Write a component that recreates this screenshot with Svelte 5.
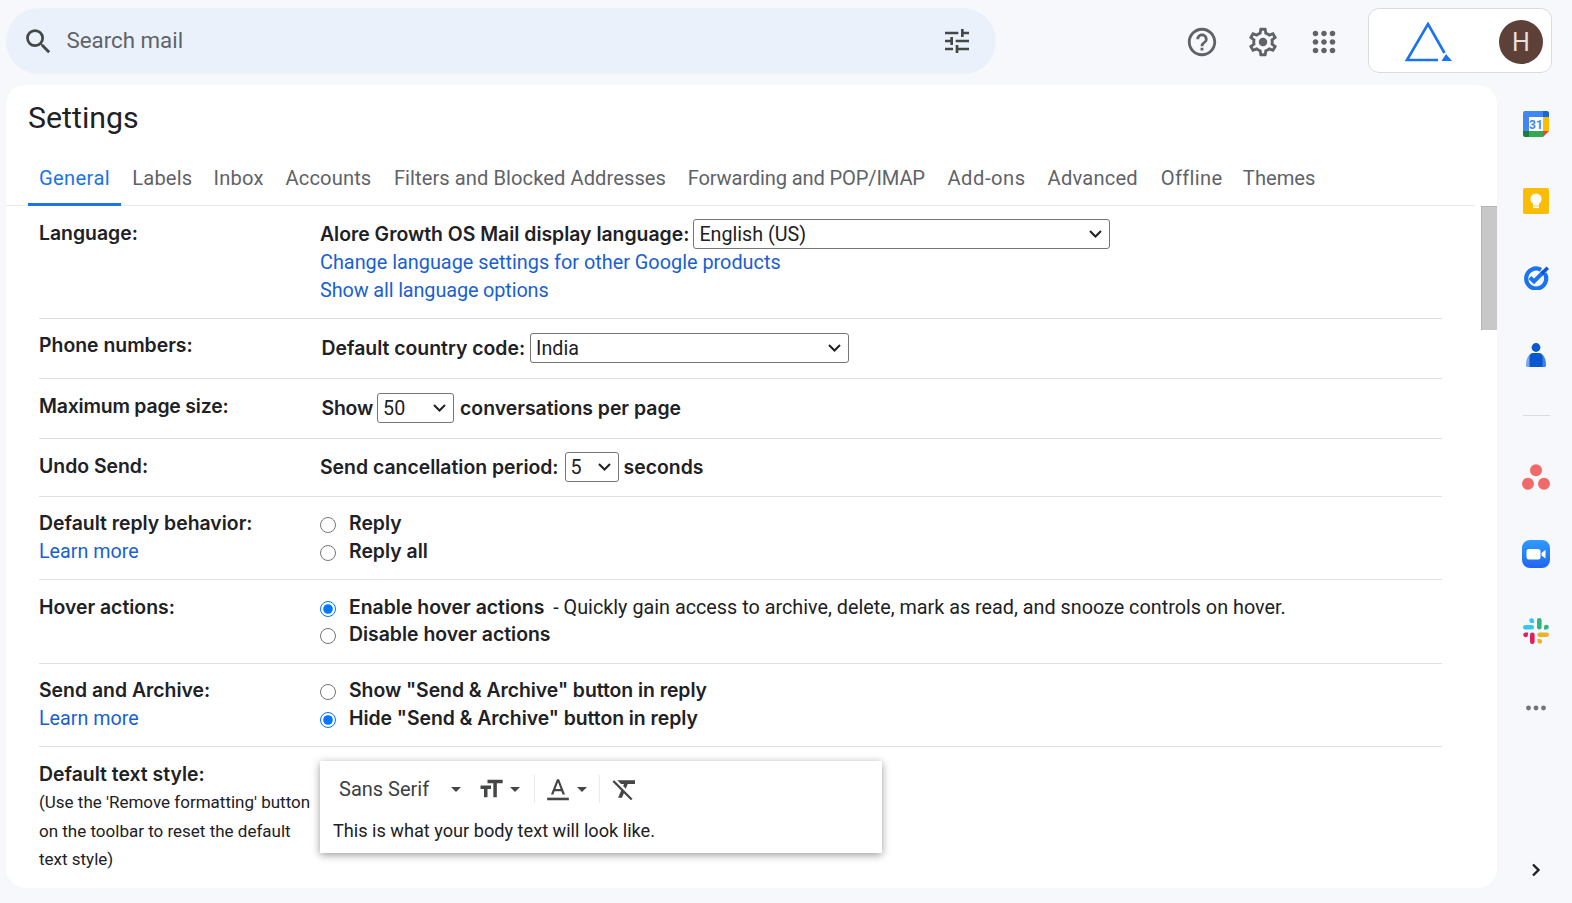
<script>
  const tabs = [
    { name: 'General', w: 93.3, sp: 0.35 },
    { name: 'Labels', w: 81.3, sp: 0.15 },
    { name: 'Inbox', w: 72, sp: 0.2 },
    { name: 'Accounts', w: 108.3, sp: 0.1 },
    { name: 'Filters and Blocked Addresses', w: 293.8, sp: 0.06 },
    { name: 'Forwarding and POP/IMAP', w: 259.7, sp: -0.16 },
    { name: 'Add-ons', w: 100.2, sp: 0.55 },
    { name: 'Advanced', w: 113.3, sp: 0.2 },
    { name: 'Offline', w: 82, sp: 0.3 },
    { name: 'Themes', w: 94.4, sp: 0 }
  ];
</script>

<div class="page">
  <header class="top">
    <div class="search">
      <svg class="ic-search" viewBox="0 0 24 24" width="33" height="33"><path fill="#444746" d="M15.5 14h-.79l-.28-.27A6.47 6.47 0 0 0 16 9.5 6.5 6.5 0 1 0 9.5 16c1.61 0 3.09-.59 4.23-1.57l.27.28v.79l5 4.99L20.49 19l-4.99-5zm-6 0C7.01 14 5 11.99 5 9.5S7.01 5 9.5 5 14 7.01 14 9.5 11.99 14 9.5 14z"/></svg>
      <span class="search-text">Search mail</span>
      <svg class="ic-filter" viewBox="0 0 24 24" width="32" height="32"><path fill="#444746" d="M3 17v2h6v-2H3zM3 5v2h10V5H3zm10 16v-2h8v-2h-8v-2h-2v6h2zM7 9v2H3v2h4v2h2V9H7zm14 4v-2H11v2h10zm-6-4h2V7h4V5h-4V3h-2v6z"/></svg>
    </div>
    <div class="actions">
      <svg viewBox="0 0 24 24" width="34" height="34"><path fill="#5f6368" d="M11 18h2v-2h-2v2zm1-16C6.48 2 2 6.48 2 12s4.48 10 10 10 10-4.48 10-10S17.52 2 12 2zm0 18c-4.41 0-8-3.59-8-8s3.59-8 8-8 8 3.59 8 8-3.59 8-8 8zm0-14c-2.21 0-4 1.79-4 4h2c0-1.1.9-2 2-2s2 .9 2 2c0 2-3 1.75-3 5h2c0-2.25 3-2.5 3-5 0-2.21-1.79-4-4-4z"/></svg>
      <svg viewBox="0 0 24 24" width="34" height="34"><path fill="#5f6368" d="M19.43 12.98c.04-.32.07-.64.07-.98 0-.34-.03-.66-.07-.98l2.11-1.65c.19-.15.24-.42.12-.64l-2-3.46c-.09-.16-.26-.25-.44-.25-.06 0-.12.01-.17.03l-2.49 1c-.52-.4-1.08-.73-1.69-.98l-.38-2.65A.488.488 0 0 0 14 2h-4c-.25 0-.46.18-.49.42l-.38 2.65c-.61.25-1.17.59-1.69.98l-2.49-1a.566.566 0 0 0-.18-.03c-.17 0-.34.09-.43.25l-2 3.46c-.13.22-.07.49.12.64l2.11 1.65c-.04.32-.07.65-.07.98 0 .33.03.66.07.98l-2.11 1.65c-.19.15-.24.42-.12.64l2 3.46c.09.16.26.25.44.25.06 0 .12-.01.17-.03l2.49-1c.52.4 1.08.73 1.69.98l.38 2.65c.03.24.24.42.49.42h4c.25 0 .46-.18.49-.42l.38-2.65c.61-.25 1.17-.59 1.69-.98l2.49 1c.06.02.12.03.18.03.17 0 .34-.09.43-.25l2-3.46c.12-.22.07-.49-.12-.64l-2.11-1.65zm-1.98-1.71c.04.31.05.52.05.73 0 .21-.02.43-.05.73l-.14 1.13.89.7 1.08.84-.7 1.21-1.27-.51-1.04-.42-.9.68c-.43.32-.84.56-1.25.73l-1.06.43-.16 1.13-.2 1.35h-1.4l-.19-1.35-.16-1.13-1.06-.43c-.43-.18-.83-.41-1.23-.71l-.91-.7-1.06.43-1.27.51-.7-1.21 1.08-.84.89-.7-.14-1.13c-.03-.31-.05-.54-.05-.74s.02-.43.05-.73l.14-1.13-.89-.7-1.08-.84.7-1.21 1.27.51 1.04.42.9-.68c.43-.32.84-.56 1.25-.73l1.06-.43.16-1.13.2-1.35h1.39l.19 1.35.16 1.13 1.06.43c.43.18.83.41 1.23.71l.91.7 1.06-.43 1.27-.51.7 1.21-1.07.85-.89.7.14 1.13z"/><circle cx="12" cy="12" r="3" fill="#5f6368"/></svg>
      <svg viewBox="0 0 24 24" width="34" height="34"><path fill="#5f6368" d="M6 8c1.1 0 2-.9 2-2s-.9-2-2-2-2 .9-2 2 .9 2 2 2zm6 12c1.1 0 2-.9 2-2s-.9-2-2-2-2 .9-2 2 .9 2 2 2zm-6 0c1.1 0 2-.9 2-2s-.9-2-2-2-2 .9-2 2 .9 2 2 2zm0-6c1.1 0 2-.9 2-2s-.9-2-2-2-2 .9-2 2 .9 2 2 2zm6 0c1.1 0 2-.9 2-2s-.9-2-2-2-2 .9-2 2 .9 2 2 2zm4-8c0 1.1.9 2 2 2s2-.9 2-2-.9-2-2-2-2 .9-2 2zm-4 2c1.1 0 2-.9 2-2s-.9-2-2-2-2 .9-2 2 .9 2 2 2zm6 6c1.1 0 2-.9 2-2s-.9-2-2-2-2 .9-2 2 .9 2 2 2zm0 6c1.1 0 2-.9 2-2s-.9-2-2-2-2 .9-2 2 .9 2 2 2z"/></svg>
    </div>
    <div class="account">
      <svg class="logo" viewBox="0 0 48 40" width="48" height="40">
        <path d="M39.500 31 L23 2 L2 38 H33" fill="none" stroke="#1a73f0" stroke-width="2.6"/>
        <path d="M41 32 L47 39 H36.500 Z" fill="#1a73f0"/>
      </svg>
      <div class="avatar">H</div>
    </div>
  </header>

  <div class="body">
    <section class="card">
      <h1>Settings</h1>
      <nav class="tabs">
        {#each tabs as t, i}
          <span class="tab" class:active={i === 0} style="width:{t.w}px;letter-spacing:{t.sp}px">{t.name}</span>
        {/each}
      </nav>
      <div class="scrollwrap">
        <div class="content">
          <div class="row r1">
            <div class="label">Language:</div>
            <div class="val">
              <div class="line strong"><span>Alore Growth OS Mail display language:</span>
                <select class="s-lang"><option>English (US)</option></select>
              </div>
              <div class="line"><span class="link">Change language settings for other Google products</span></div>
              <div class="line"><span class="link tight">Show all language options</span></div>
            </div>
          </div>
          <div class="row r2">
            <div class="label">Phone numbers:</div>
            <div class="val shifted">
              <div class="line strong"><span>Default country code:</span>
                <select class="s-country"><option>India</option></select>
              </div>
            </div>
          </div>
          <div class="row r3">
            <div class="label narrow">Maximum page size:</div>
            <div class="val shifted">
              <div class="line strong"><span class="narrow">Show</span>
                <select class="s-page"><option>50</option></select>
                <span>conversations per page</span>
              </div>
            </div>
          </div>
          <div class="row r4">
            <div class="label">Undo Send:</div>
            <div class="val">
              <div class="line strong"><span>Send cancellation period:</span>
                <select class="s-undo"><option>5</option></select>
                <span>seconds</span>
              </div>
            </div>
          </div>
          <div class="row r5">
            <div class="label">Default reply behavior:<div class="link lm">Learn more</div></div>
            <div class="val">
              <label class="radio"><input type="radio" name="reply" /><b>Reply</b></label>
              <label class="radio"><input type="radio" name="reply" /><b>Reply all</b></label>
            </div>
          </div>
          <div class="row r6">
            <div class="label">Hover actions:</div>
            <div class="val">
              <label class="radio"><input type="radio" name="hover" checked /><b>Enable hover actions</b><span class="desc">&nbsp;- Quickly gain access to archive, delete, mark as read, and snooze controls on hover.</span></label>
              <label class="radio"><input type="radio" name="hover" /><b>Disable hover actions</b></label>
            </div>
          </div>
          <div class="row r7">
            <div class="label">Send and Archive:<div class="link lm">Learn more</div></div>
            <div class="val">
              <label class="radio"><input type="radio" name="sa" /><b class="snug">Show "Send &amp; Archive" button in reply</b></label>
              <label class="radio"><input type="radio" name="sa" checked /><b class="snug">Hide "Send &amp; Archive" button in reply</b></label>
            </div>
          </div>
          <div class="row r8">
            <div class="label">Default text style:
              <div class="note">(Use the 'Remove formatting' button on the toolbar to reset the default text style)</div>
            </div>
            <div class="val">
              <div class="editor">
                <div class="toolbar">
                  <span class="font">Sans Serif</span>
                  <i class="arrow a1"></i>
                  <svg class="tsize" viewBox="0 0 24 24" width="24" height="24"><path fill="#444746" d="M9 4v3h5v12h3V7h5V4H9zm-6 8h3v7h3v-7h3V9H3v3z"/></svg>
                  <i class="arrow a2"></i>
                  <span class="sep"></span>
                  <svg class="tcolor" viewBox="0 0 24 24" width="24" height="24"><path fill="#444746" d="M11 3 5.500 17h2.250l1.120-3h6.250l1.120 3h2.250L13 3h-2zm-1.380 9L12 5.670 14.380 12H9.620z"/><rect x="2" y="20" width="20" height="2.400" fill="#444746"/></svg>
                  <i class="arrow a3"></i>
                  <span class="sep s2"></span>
                  <svg class="tclear" viewBox="0 0 24 24" width="26" height="26"><path fill="#444746" d="M3.270 5 2 6.270l6.970 6.970L6.500 19h3l1.570-3.660L16.730 21 18 19.730 3.550 5.270 3.270 5zM6 5v.180L8.820 8h2.400l-.720 1.680 2.100 2.100L14.210 8H20V5H6z"/></svg>
                </div>
                <div class="sample">This is what your body text will look like.</div>
              </div>
            </div>
          </div>
        </div>
        <div class="track"><div class="thumb"></div></div>
      </div>
    </section>

    <aside class="side">
      <div class="item">
        <svg viewBox="0 0 26 26" width="26" height="26">
          <path d="M6 0h14v6H6z" fill="#4285f4"/><path d="M2 0h4v6H0V2a2 2 0 0 1 2-2z" fill="#4285f4"/><path d="M0 6h6v14H0z" fill="#4285f4"/>
          <path d="M20 0h4a2 2 0 0 1 2 2v4h-6z" fill="#1967d2"/><path d="M20 6h6v14h-6z" fill="#fbbc04"/>
          <path d="M6 20h14v6H6z" fill="#34a853"/><path d="M0 20h6v6H2a2 2 0 0 1-2-2z" fill="#188038"/><path d="M20 20h6l-6 6z" fill="#ea4335"/>
          <rect x="6" y="6" width="14" height="14" fill="#fff"/>
          <text x="13" y="17.500" text-anchor="middle" class="cal">31</text>
        </svg>
      </div>
      <div class="item">
        <svg viewBox="0 0 26 26" width="26" height="26">
          <rect width="26" height="26" rx="2" fill="#fbbc04"/>
          <circle cx="13" cy="11" r="5.600" fill="#fff"/><rect x="10" y="15" width="6" height="2.500" fill="#fff"/><rect x="10" y="18.300" width="6" height="1.800" fill="#fff"/>
        </svg>
      </div>
      <div class="item">
        <svg viewBox="0 0 26 24" width="26" height="24">
          <path d="M21.800 7.500A10 10 0 1 1 18 3.800" fill="none" stroke="#1a73f0" stroke-width="4.200"/>
          <path d="M7 11.500l4 4 10-10" fill="none" stroke="#1a73f0" stroke-width="4"/>
          <path d="M17.500 6.500l6-6 2.500 2.500-6 6z" fill="#0b57d0"/>
        </svg>
      </div>
      <div class="item">
        <svg viewBox="0 0 20 24" width="20" height="24">
          <circle cx="10" cy="4.500" r="4.400" fill="#0b57d0"/>
          <path d="M4 24H1.500A1.500 1.500 0 0 1 0 22.500C0 15 3 11 6 10.600V24z" fill="#7aa7f0"/>
          <path d="M16 24h2.500a1.500 1.500 0 0 0 1.500-1.500C20 15 17 11 14 10.600V24z" fill="#3d7ff0"/>
          <path d="M3.500 24V14a4 4 0 0 1 4-4h5a4 4 0 0 1 4 4v10z" fill="#0b57d0"/>
        </svg>
      </div>
      <div class="divider"><span></span></div>
      <div class="item">
        <svg viewBox="0 0 28 26" width="28" height="26"><circle cx="14" cy="6.200" r="6" fill="#f06a6a"/><circle cx="6" cy="19.800" r="6" fill="#f06a6a"/><circle cx="22" cy="19.800" r="6" fill="#f06a6a"/></svg>
      </div>
      <div class="item">
        <svg viewBox="0 0 28 28" width="28" height="28">
          <defs><linearGradient id="z" x1="0" y1="0" x2="0" y2="1"><stop offset="0" stop-color="#2d9bff"/><stop offset="1" stop-color="#2464f0"/></linearGradient></defs>
          <rect width="28" height="28" rx="8" fill="url(#z)"/>
          <rect x="4.500" y="9" width="14" height="10.500" rx="2.500" fill="#fff"/>
          <path d="M19.500 13l4-3.200v8.800l-4-3.200z" fill="#fff"/>
        </svg>
      </div>
      <div class="item">
        <svg viewBox="0 0 26 26" width="26" height="26">
          <g fill="#36c5f0"><rect x="0" y="7" width="11" height="4.600" rx="2.300"/><path d="M11 5V2.600A2.400 2.400 0 1 0 8.600 5z"/></g>
          <g fill="#2eb67d"><rect x="14" y="0" width="4.600" height="11.600" rx="2.300"/><path d="M21 11.500h2.600A2.400 2.400 0 1 0 21 9z"/></g>
          <g fill="#ecb22e"><rect x="14.400" y="14.400" width="11.600" height="4.600" rx="2.300"/><path d="M14.400 21v2.600A2.400 2.400 0 1 0 17 21z"/></g>
          <g fill="#e01e5a"><rect x="7" y="14.400" width="4.600" height="11.600" rx="2.300"/><path d="M5 14.400H2.400A2.400 2.400 0 1 0 5 17z"/></g>
        </svg>
      </div>
      <div class="item">
        <svg viewBox="0 0 20 6" width="20" height="6"><g fill="#70757a"><circle cx="2.500" cy="3" r="2.400"/><circle cx="10" cy="3" r="2.400"/><circle cx="17.500" cy="3" r="2.400"/></g></svg>
      </div>
      <div class="chev">
        <svg viewBox="0 0 10 14" width="10" height="14"><path d="M2 1.500 7.500 7 2 12.500" fill="none" stroke="#1f1f1f" stroke-width="2.400"/></svg>
      </div>
    </aside>
  </div>
</div>

<style>
  :global(body) { margin: 0; background: #f6f8fc; }
  .page { width: 1572px; height: 903px; display: flex; flex-direction: column; overflow: hidden; background: #f6f8fc; font-family: Inter, "Liberation Sans", sans-serif; color: #202124; }
  .top { height: 85px; flex: none; display: flex; align-items: flex-start; padding-left: 6px; }
  .search { width: 990px; height: 66px; flex: none; margin-top: 8px; background: #eaf1fb; border-radius: 33px; display: flex; align-items: center; padding: 0 23px 0 16px; box-sizing: border-box; }
  .search-text { font: 400 22.3px/28px Roboto, sans-serif; color: #5f6368; margin: -2px 0 0 11.5px; flex: 1; }
  .actions { display: flex; gap: 27px; margin: 25px 0 0 189px; flex: none; }
  .account { width: 184px; height: 65px; margin: 8px 0 0 27px; flex: none; box-sizing: border-box; background: #fff; border: 1px solid #dadce0; border-radius: 11px; display: flex; align-items: center; padding: 0 8px 0 36px; justify-content: space-between; }
  .logo { margin-top: 3px; }
  .avatar { width: 44px; height: 44px; border-radius: 50%; background: #5d4037; color: #e9dfdb; font: 400 25px/46px Roboto, sans-serif; text-align: center; margin-top: 2px; }

  .body { flex: 1; min-height: 0; display: flex; padding: 0 0 15px 6px; }
  .card { width: 1491px; flex: none; background: #fff; border-radius: 20px; display: flex; flex-direction: column; overflow: hidden; }
  h1 { margin: 0; font: 400 30.3px/36px Roboto, sans-serif; color: #202124; padding: 15px 0 0 22px; height: 51px; flex: none; box-sizing: content-box; }
  .tabs { height: 55px; flex: none; box-sizing: border-box; display: flex; align-items: flex-end; padding-left: 22px; margin-right: 22px; border-bottom: 1px solid #e8eaed; }
  .tab { flex: none; padding: 0 0 13px 11px; height: 43px; box-sizing: border-box; margin-bottom: -1px; font: 400 20.15px/30px Roboto, sans-serif; color: #5f6368; white-space: nowrap; border-bottom: 3px solid transparent; }
  .tab.active { color: #1a73e8; border-bottom-color: #1a73e8; }

  .scrollwrap { flex: 1; min-height: 0; display: flex; }
  .content { flex: 1; min-width: 0; padding: 0 39px 0 33px; overflow: hidden; }
  .track { width: 16px; flex: none; }
  .thumb { height: 124px; background: #c8c8c8; box-sizing: border-box; border-top: 1px solid #b4b4b4; border-left: 1px solid #b4b4b4; }

  .row { display: grid; grid-template-columns: 281px 1fr; border-bottom: 1px solid #e0e0e0; box-sizing: border-box; }
  .label { font: 600 19.4px/28px Inter, sans-serif; color: #202124; }
  .label .lm { font: 400 19.7px/28px Roboto, sans-serif; color: #1a5fd1; margin-top: 1px; }
  .link { color: #1a5fd1; font: 400 19.85px/27px Roboto, sans-serif; }
  .tight { letter-spacing: -0.12px; }
  .narrow { letter-spacing: -0.18px; }
  .snug { letter-spacing: -0.04px; }
  .val { min-width: 0; }
  .shifted { padding-left: 1.5px; }
  .line { display: flex; align-items: center; height: 28px; gap: 5px; white-space: nowrap; }
  .strong { font: 600 19.4px/28px Inter, sans-serif; }
  select { font: 400 19.7px Roboto, sans-serif; height: 30px; padding: 0 0 0 5px; color: #202124; border: 1px solid #767676; border-radius: 3px; box-sizing: border-box; appearance: none; background: #fff url("data:image/svg+xml,%3Csvg xmlns='http://www.w3.org/2000/svg' width='13' height='8'%3E%3Cpath d='M1 1l5.500 5.500L12 1' fill='none' stroke='%23202124' stroke-width='2'/%3E%3C/svg%3E") no-repeat right 7px center; }
  .s-lang { width: 417px; margin-left: -1px; }
  .s-country { width: 319px; }
  .s-page { width: 77px; margin: 0 1px 0 -1px; }
  .s-undo { width: 54px; margin-left: 1px; }

  .radio { display: flex; align-items: center; height: 28px; white-space: nowrap; }
  .radio input { width: 16px; height: 16px; margin: 4px 13px 0 0; flex: none; }
  .radio b { font: 600 19.4px/28px Inter, sans-serif; }
  .desc { font: 400 19.8px/28px Roboto, sans-serif; margin: 2px 0 0 4px; }

  .r1 { height: 113px; padding-top: 13px; }
  .r1 .val { padding-top: 1px; }
  .r2 { height: 60px; padding-top: 12px; }
  .r2 .val { padding-top: 3px; }
  .r3 { height: 60px; padding-top: 13px; }
  .r3 .val { padding-top: 2px; }
  .r4 { height: 58px; padding-top: 13px; }
  .r4 .val { padding-top: 1px; }
  .r5 { height: 83px; padding-top: 12px; }
  .r6 { height: 84px; padding-top: 13px; }
  .r6 .radio + .radio { margin-top: -1px; }
  .r7 { height: 83px; padding-top: 12px; }
  .r8 { border-bottom: 0; padding-top: 13px; }
  .note { font: 400 17px/28.5px Roboto, sans-serif; width: 275px; }

  .editor { width: 562px; height: 92px; margin-top: 1px; background: #fff; box-shadow: 0 2px 8px rgba(0,0,0,.4); box-sizing: border-box; padding: 0 13px; font-family: Roboto, sans-serif; color: #444746; }
  .toolbar { height: 57px; display: flex; align-items: center; padding: 0 0 1px 6px; box-sizing: border-box; }
  .font { font: 400 20px/28px Roboto, sans-serif; color: #3c4043; width: 112px; }
  .arrow { width: 0; height: 0; border: 5.5px solid transparent; border-top: 5.5px solid #444746; border-bottom: 0; display: block; }
  .tsize { margin-left: 16px; width: 28px; height: 28px; }
  .a2 { margin-left: 5px; }
  .sep { width: 1px; height: 28px; background: #e8eaed; margin: 0 11px 0 14px; }
  .tcolor { width: 26px; height: 26px; margin-left: -1px; }
  .a3 { margin-left: 6px; }
  .s2 { margin: 0 11px 0 12px; }
  .tclear { width: 30px; height: 30px; margin-left: -1px; }
  .sample { font: 400 18.15px/26px Roboto, sans-serif; color: #202124; }

  .side { flex: 1; display: flex; flex-direction: column; align-items: center; padding-left: 3px; }
  .item { height: 77px; flex: none; display: flex; align-items: center; justify-content: center; }
  .divider { height: 45px; display: flex; align-items: center; flex: none; }
  .divider span { display: block; width: 27px; height: 1px; background: #dadce0; }
  .chev { margin-top: auto; height: 40px; display: flex; align-items: center; margin-bottom: -2px; }
  .cal { font: 700 12px Roboto, sans-serif; fill: #4285f4; }
</style>
